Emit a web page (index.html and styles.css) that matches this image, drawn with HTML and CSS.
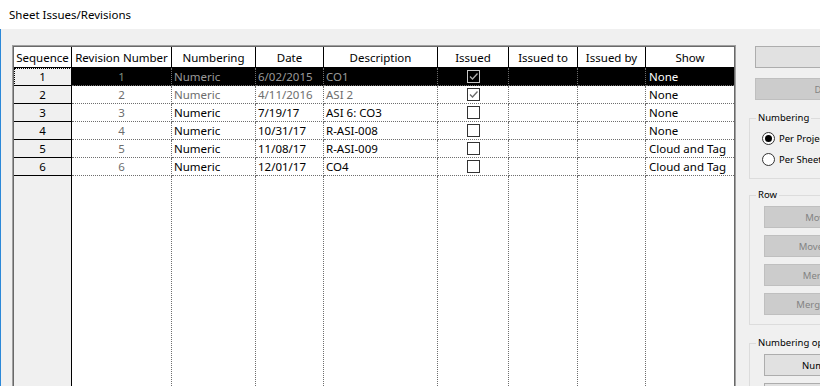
FILE: index.html
```html
<!DOCTYPE html>
<html lang="en">
<head>
    <meta charset="UTF-8">
    <title>Sheet Issues/Revisions</title>
    <link rel="stylesheet" href="styles.css">
</head>
<body>
    <div class="titlebar">Sheet Issues/Revisions</div>

    <div class="client">
        <div class="grid-frame">
            <table class="grid">
                <thead>
                    <tr>
                        <th class="c-seq">Sequence</th>
                        <th class="c-rev">Revision Number</th>
                        <th class="c-num">Numbering</th>
                        <th class="c-date">Date</th>
                        <th class="c-desc">Description</th>
                        <th class="c-iss">Issued</th>
                        <th class="c-to">Issued to</th>
                        <th class="c-by">Issued by</th>
                        <th class="c-show">Show</th>
                    </tr>
                </thead>
                <tbody>
                    <tr class="selected">
                        <td class="seq focus">1</td>
                        <td class="rev">1</td>
                        <td class="txt">Numeric</td>
                        <td class="txt">6/02/2015</td>
                        <td class="txt">CO1</td>
                        <td class="iss"><span class="check"><svg viewBox="0 0 11 11" width="11" height="11"><polyline points="2,5.5 4.5,8 9.5,2.5"/></svg></span></td>
                        <td></td>
                        <td></td>
                        <td class="txt show">None</td>
                    </tr>
                    <tr class="locked">
                        <td class="seq">2</td>
                        <td class="rev">2</td>
                        <td class="txt">Numeric</td>
                        <td class="txt">4/11/2016</td>
                        <td class="txt">ASI 2</td>
                        <td class="iss"><span class="check"><svg viewBox="0 0 11 11" width="11" height="11"><polyline points="2,5.5 4.5,8 9.5,2.5"/></svg></span></td>
                        <td></td>
                        <td></td>
                        <td class="txt show">None</td>
                    </tr>
                    <tr>
                        <td class="seq">3</td>
                        <td class="rev">3</td>
                        <td class="txt">Numeric</td>
                        <td class="txt">7/19/17</td>
                        <td class="txt">ASI 6: CO3</td>
                        <td class="iss"><span class="check"></span></td>
                        <td></td>
                        <td></td>
                        <td class="txt show">None</td>
                    </tr>
                    <tr>
                        <td class="seq">4</td>
                        <td class="rev">4</td>
                        <td class="txt">Numeric</td>
                        <td class="txt">10/31/17</td>
                        <td class="txt">R-ASI-008</td>
                        <td class="iss"><span class="check"></span></td>
                        <td></td>
                        <td></td>
                        <td class="txt show">None</td>
                    </tr>
                    <tr>
                        <td class="seq">5</td>
                        <td class="rev">5</td>
                        <td class="txt">Numeric</td>
                        <td class="txt">11/08/17</td>
                        <td class="txt">R-ASI-009</td>
                        <td class="iss"><span class="check"></span></td>
                        <td></td>
                        <td></td>
                        <td class="txt show">Cloud and Tag</td>
                    </tr>
                    <tr>
                        <td class="seq">6</td>
                        <td class="rev">6</td>
                        <td class="txt">Numeric</td>
                        <td class="txt">12/01/17</td>
                        <td class="txt">CO4</td>
                        <td class="iss"><span class="check"></span></td>
                        <td></td>
                        <td></td>
                        <td class="txt show">Cloud and Tag</td>
                    </tr>
                    <tr class="filler">
                        <td class="seq"></td>
                        <td></td>
                        <td></td>
                        <td></td>
                        <td></td>
                        <td></td>
                        <td></td>
                        <td></td>
                        <td></td>
                    </tr>
                </tbody>
            </table>
        </div>

        <div class="side">
            <button class="btn btn-wide">Add</button>
            <button class="btn btn-wide btn-gap" disabled>Delete</button>

            <fieldset class="group">
                <legend>Numbering</legend>
                <div class="group-body">
                    <label class="radio"><span class="dot on"></span>Per Project</label>
                    <label class="radio"><span class="dot"></span>Per Sheet</label>
                </div>
            </fieldset>

            <fieldset class="group group-row">
                <legend>Row</legend>
                <div class="group-body buttons">
                    <button class="btn" disabled>Move Up</button>
                    <button class="btn" disabled>Move Down</button>
                    <button class="btn" disabled>Merge Up</button>
                    <button class="btn" disabled>Merge Down</button>
                </div>
            </fieldset>

            <fieldset class="group group-opts">
                <legend>Numbering options</legend>
                <div class="group-body buttons">
                    <button class="btn">Numeric...</button>
                    <button class="btn">Alphanumeric...</button>
                </div>
            </fieldset>
        </div>
    </div>
</body>
</html>
```

FILE: styles.css
```css
*{
    margin: 0;
    padding: 0;
    box-sizing: border-box;
}
body{
    width: 820px;
    height: 386px;
    overflow: hidden;
    background: #fff;
    font-family: "Noto Sans", "Open Sans", sans-serif;
    font-size: 11px;
    color: #000;
}
.titlebar{
    height: 29px;
    line-height: 29px;
    padding-left: 9px;
    font-size: 11.5px;
    background: #fff;
}
.client{
    display: flex;
    align-items: flex-start;
    gap: 13px;
    height: 357px;
    padding: 16px 0 0 11px;
    border-left: 1px solid #2b88d8;
    background: #f0f0f0;
    overflow: hidden;
}

/* grid */
.grid-frame{
    flex: none;
    width: 724px;
    height: 420px;
    border: 1px solid #a0a0a0;
    overflow: hidden;
}
.grid{
    width: 722px;
    border: 1px solid #696969;
    border-collapse: separate;
    border-spacing: 0;
    table-layout: fixed;
    background: #fff;
    font-size: 11.5px;
}
.grid thead tr{
    height: 21px;
}
.grid tbody tr{
    height: 18px;
}
.grid th{
    font-weight: normal;
    text-align: center;
    border-right: 1px solid #000;
    border-bottom: 1px solid #000;
    white-space: nowrap;
    overflow: hidden;
}
.grid th.c-show{
    border-right: none;
}
.c-seq{ width: 58px; }
.c-rev{ width: 100px; }
.c-num{ width: 84px; }
.c-date{ width: 68px; }
.c-desc{ width: 114px; }
.c-iss{ width: 71px; }
.c-to{ width: 69px; }
.c-by{ width: 68px; }
.c-show{ width: 88px; }

.grid td{
    border-right: 1px dotted #6e6e6e;
    border-bottom: 1px dotted #6e6e6e;
    white-space: nowrap;
    overflow: hidden;
    vertical-align: middle;
}
.grid td:last-child{
    border-right: none;
}
.grid td.seq{
    text-align: center;
    color: #000;
    background: #f0f0f0;
    border-right: 1px solid #000;
    border-bottom: 1px solid #000;
}
.grid td.focus{
    outline: 1px dotted #000;
    outline-offset: -1px;
}
.grid td.rev{
    text-align: center;
    color: #6d6d6d;
}
.grid td.txt{
    padding-left: 2px;
}
.grid td.show{
    padding-left: 3px;
}
.grid td.iss{
    text-align: center;
    font-size: 0;
}
.check{
    display: inline-block;
    width: 13px;
    height: 13px;
    border: 1px solid #333;
    background: #fff;
    vertical-align: middle;
}
.check svg{
    display: block;
}
.check polyline{
    fill: none;
    stroke: #6a6a6a;
    stroke-width: 1.3;
}

.locked td.txt{
    color: #6d6d6d;
}
.locked td.show{
    color: #000;
}
.selected td{
    background: #000;
    color: #9a9a9a;
}
.selected td.rev{
    color: #7f8f7f;
}
.selected td.show{
    color: #fff;
}
.selected .check{
    background: #000;
    border-color: #c8c8c8;
}
.selected .check polyline{
    stroke: #b0b0b0;
}
.grid tr.filler{
    height: 230px;
}
.grid tr.filler td{
    border-bottom: none;
}

/* right side */
.side{
    flex: none;
    width: 170px;
    display: flex;
    flex-direction: column;
    font-size: 9.5px;
}
.side > *{
    flex: none;
}
.btn{
    display: block;
    flex: none;
    height: 22px;
    width: 122px;
    border: 1px solid #adadad;
    background: #e1e1e1;
    font-family: inherit;
    font-size: 9.5px;
    color: #000;
    text-align: center;
}
.btn:disabled{
    background: #cccccc;
    border-color: #bfbfbf;
    color: #838383;
}
.btn-wide{
    width: 148px;
    margin: 1px 0 0 6px;
}
.btn-wide.btn-gap{
    margin-top: 10px;
}
.group{
    margin-top: 11px;
    width: 160px;
    border: 1px solid #dcdcdc;
    padding: 0;
}
.group legend{
    margin-left: 6px;
    padding: 0 2px;
    line-height: 14px;
    font-size: 9.5px;
}
.group-row{
    margin-top: 9px;
}
.group-body{
    padding: 3px 0 8px 12px;
}
.radio{
    display: flex;
    align-items: center;
    gap: 4px;
    height: 21px;
}
.dot{
    width: 13px;
    height: 13px;
    border: 1px solid #333;
    border-radius: 50%;
    background: #fff;
    display: flex;
    align-items: center;
    justify-content: center;
}
.dot.on::after{
    content: "";
    width: 7px;
    height: 7px;
    border-radius: 50%;
    background: #000;
}
.buttons{
    display: flex;
    flex-direction: column;
    gap: 7px;
    padding: 4px 0 9px 14px;
}
```
